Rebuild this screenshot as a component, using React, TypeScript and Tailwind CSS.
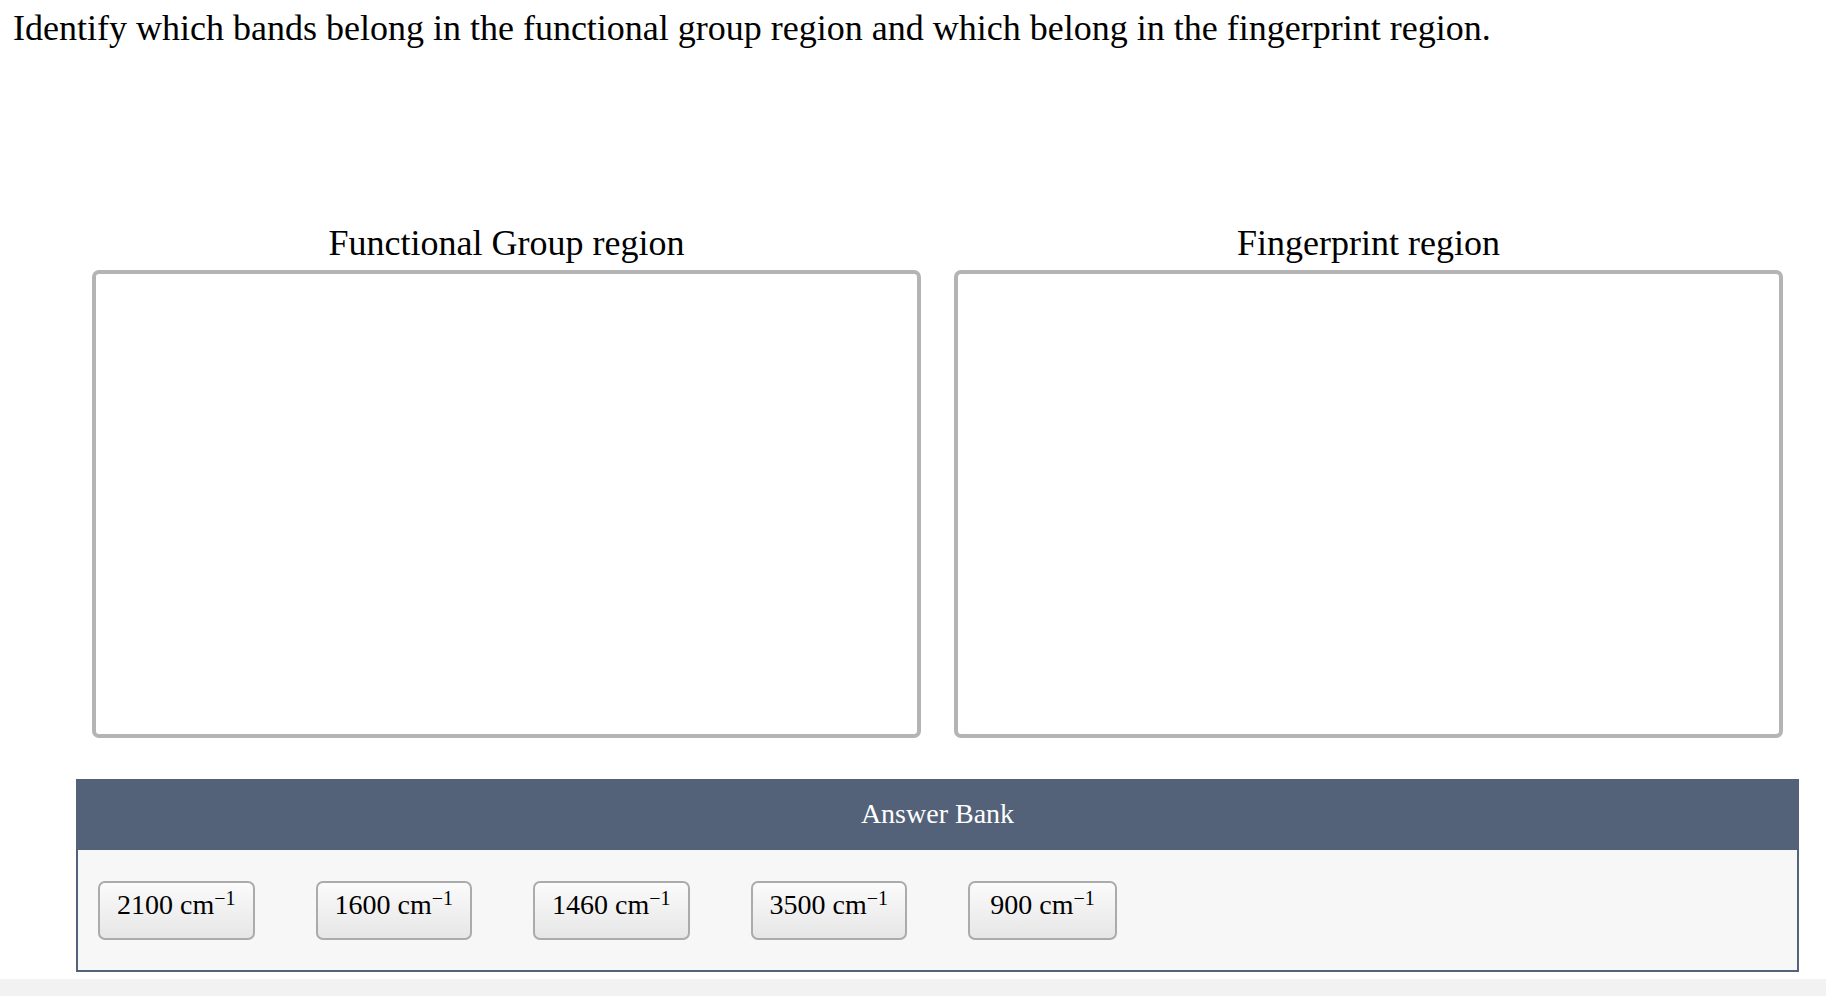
const answers = ["2100", "1600", "1460", "3500", "900"];

function Wavenumber({ value }: { value: string }) {
  return (
    <span className="whitespace-nowrap">
      {value} cm
      <sup className="text-[20px] top-[-9px]">−1</sup>
    </span>
  );
}

function DropZone({ label }: { label: string }) {
  return (
    <div className="flex flex-col">
      <h2 className="text-center text-[36px] leading-[41px] font-normal mb-[6px]">{label}</h2>
      <div className="h-[468px] rounded-[7px] border-4 border-[#b4b4b4] bg-white" />
    </div>
  );
}

export default function App() {
  return (
    <div className="bg-white text-black font-['Liberation_Serif','Times_New_Roman',serif]">
      <p className="pl-[13px] pt-[8px] text-[36px] leading-[41px]">
        Identify which bands belong in the functional group region and which belong in the fingerprint region.
      </p>

      <div className="pl-[76px] pr-[27px] mt-[174px]">
        {/* drop targets */}
        <div className="grid grid-cols-2 gap-[33px] mx-[16px]">
          <DropZone label="Functional Group region" />
          <DropZone label="Fingerprint region" />
        </div>

        {/* answer bank */}
        <div className="mt-[41px] border-2 border-[#536278]">
          <div className="h-[69px] pb-[4px] bg-[#536278] flex items-center justify-center text-white text-[28px]">
            Answer Bank
          </div>
          <div className="bg-[#f7f7f7] pl-[20px] pt-[31px] pb-[30px] flex gap-[61px]">
            {answers.map((a) => (
              <button
                key={a}
                type="button"
                className="h-[59px] min-w-[149px] px-[17px] pb-[12px] flex items-center justify-center rounded-[7px] border-2 border-[#ababab] bg-linear-to-b from-[#fbfbfb] to-[#e6e6e6] text-[28px] leading-none"
              >
                <Wavenumber value={a} />
              </button>
            ))}
          </div>
        </div>
      </div>

      <div className="mt-[7px] h-[17px] bg-[#f2f2f2]" />
    </div>
  );
}
